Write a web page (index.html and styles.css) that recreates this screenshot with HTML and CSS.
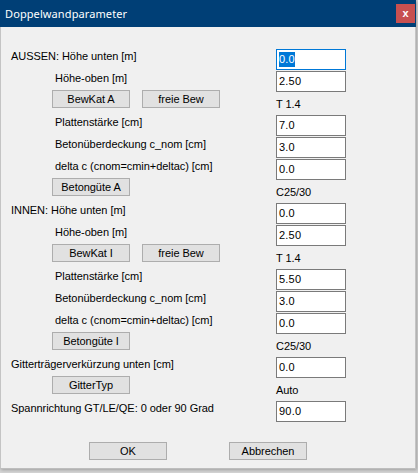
FILE: index.html
```html
<!DOCTYPE html>
<html lang="de">
<head>
<meta charset="utf-8">
<title>Doppelwandparameter</title>
<link rel="stylesheet" href="styles.css">
</head>
<body>
<div class="win">
  <div class="titlebar">
    <span class="title">Doppelwandparameter</span>
    <span class="close">x</span>
  </div>
  <div class="content">
    <div class="form">
      <div class="l">AUSSEN: Höhe unten [m]</div>
      <div class="r"><div class="tb focus"><span class="sel">0.0</span></div></div>

      <div class="l in">Höhe-oben [m]</div>
      <div class="r"><div class="tb">2.50</div></div>

      <div class="l btns"><span class="btn">BewKat A</span><span class="btn">freie Bew</span></div>
      <div class="r"><span class="txt">T 1.4</span></div>

      <div class="l in">Plattenstärke [cm]</div>
      <div class="r"><div class="tb">7.0</div></div>

      <div class="l in">Betonüberdeckung c_nom [cm]</div>
      <div class="r"><div class="tb">3.0</div></div>

      <div class="l in">delta c (cnom=cmin+deltac) [cm]</div>
      <div class="r"><div class="tb">0.0</div></div>

      <div class="l btns"><span class="btn">Betongüte A</span></div>
      <div class="r"><span class="txt">C25/30</span></div>

      <div class="l"><span class="sec">INNEN:</span>Höhe unten [m]</div>
      <div class="r"><div class="tb">0.0</div></div>

      <div class="l in">Höhe-oben [m]</div>
      <div class="r"><div class="tb">2.50</div></div>

      <div class="l btns"><span class="btn">BewKat I</span><span class="btn">freie Bew</span></div>
      <div class="r"><span class="txt">T 1.4</span></div>

      <div class="l in">Plattenstärke [cm]</div>
      <div class="r"><div class="tb">5.50</div></div>

      <div class="l in">Betonüberdeckung c_nom [cm]</div>
      <div class="r"><div class="tb">3.0</div></div>

      <div class="l in">delta c (cnom=cmin+deltac) [cm]</div>
      <div class="r"><div class="tb">0.0</div></div>

      <div class="l btns"><span class="btn">Betongüte I</span></div>
      <div class="r"><span class="txt">C25/30</span></div>

      <div class="l">Gitterträgerverkürzung unten [cm]</div>
      <div class="r"><div class="tb">0.0</div></div>

      <div class="l btns"><span class="btn">GitterTyp</span></div>
      <div class="r"><span class="txt">Auto</span></div>

      <div class="l">Spannrichtung GT/LE/QE: 0 oder 90 Grad</div>
      <div class="r"><div class="tb">90.0</div></div>
    </div>
    <div class="footer">
      <span class="btn">OK</span>
      <span class="btn">Abbrechen</span>
    </div>
  </div>
</div>
</body>
</html>
```

FILE: styles.css
```css
html, body {
  margin: 0;
  padding: 0;
}
body {
  width: 418px;
  height: 473px;
  overflow: hidden;
  background: #d4d4d4;
  font-family: "Liberation Sans", Arial, sans-serif;
  font-size: 11px;
  letter-spacing: -0.05px;
  color: #000;
}
.win {
  width: 416px;
  height: 469px;
  background: #f0f0f0;
  box-shadow: 1px 1px 3px rgba(0,0,0,0.25);
}
.titlebar {
  height: 27px;
  background: #003f76;
  display: flex;
  align-items: center;
  justify-content: space-between;
  color: #fff;
}
.title {
  padding-left: 5px;
  font-family: "Noto Sans", "Liberation Sans", sans-serif;
  font-size: 11px;
  letter-spacing: 0.1px;
}
.close {
  width: 19px;
  height: 19px;
  margin-right: 1px;
  background: #c75050;
  color: #fff;
  font-weight: bold;
  font-size: 11px;
  line-height: 18px;
  text-align: center;
  letter-spacing: 0;
}
.content {
  height: 442px;
  box-sizing: border-box;
  border-left: 1px solid #c4c4c4;
  border-right: 1px solid #c4c4c4;
  border-bottom: 1px solid #bdbdbd;
  padding-top: 22px;
}
.form {
  display: grid;
  grid-template-columns: 265px 70px;
  grid-auto-rows: 22px;
  padding-left: 10px;
}
.l {
  margin-top: -4px;
  height: 22px;
  display: flex;
  align-items: center;
  white-space: nowrap;
}
.l.in {
  padding-left: 44px;
}
.l.btns {
  align-items: flex-start;
  padding-left: 41px;
  padding-top: 1px;
  gap: 12px;
}
.sec {
  display: inline-block;
  width: 40px;
}
.r {
  display: flex;
  align-items: flex-start;
}
.txt {
  line-height: 22px;
}
.tb {
  width: 70px;
  height: 21px;
  box-sizing: border-box;
  border: 1px solid #7a7a7a;
  background: #fff;
  padding-left: 2px;
  line-height: 19px;
  letter-spacing: 0.2px;
}
.tb.focus {
  border-color: #0078d7;
}
.sel {
  background: #0078d7;
  color: #fff;
  display: inline-block;
  line-height: 15px;
}
.btn {
  display: inline-block;
  width: 78px;
  height: 18px;
  box-sizing: border-box;
  border: 1px solid #adadad;
  background: #e1e1e1;
  text-align: center;
  line-height: 16px;
}
.footer {
  display: flex;
  gap: 62px;
  padding-left: 88px;
  margin-top: 19px;
}
```
